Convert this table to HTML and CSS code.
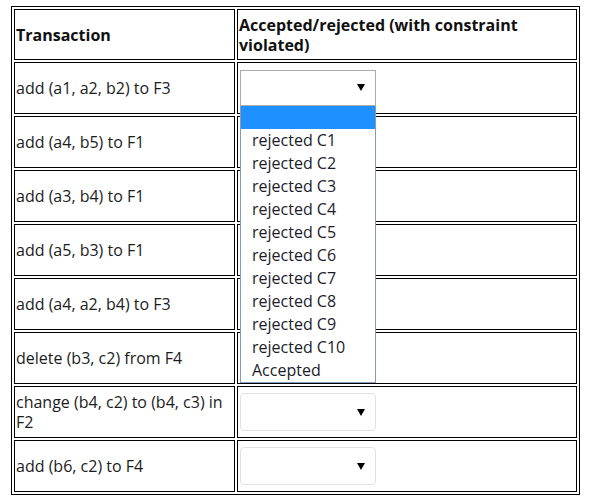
FILE: index.html
```html
<!DOCTYPE html>
<html>
<head>
<meta charset="utf-8">
<link rel="stylesheet" href="styles.css">
</head>
<body>
<table class="grid">
  <tr class="head">
    <th class="c1">Transaction</th>
    <th class="c2">Accepted/rejected (with constraint violated)</th>
  </tr>
  <tr>
    <td>add (a1, a2, b2) to F3</td>
    <td class="sc">
      <div class="dd">
        <div class="sel open"><svg class="arr" width="8" height="7" viewBox="0 0 8 7"><polygon points="0,0 8,0 4,7" fill="#000"/></svg></div>
        <ul class="list">
          <li class="hl">&nbsp;</li>
          <li>rejected C1</li>
          <li>rejected C2</li>
          <li>rejected C3</li>
          <li>rejected C4</li>
          <li>rejected C5</li>
          <li>rejected C6</li>
          <li>rejected C7</li>
          <li>rejected C8</li>
          <li>rejected C9</li>
          <li>rejected C10</li>
          <li>Accepted</li>
        </ul>
      </div>
    </td>
  </tr>
  <tr><td>add (a4, b5) to F1</td><td class="sc"><div class="sel"><svg class="arr" width="8" height="7" viewBox="0 0 8 7"><polygon points="0,0 8,0 4,7" fill="#000"/></svg></div></td></tr>
  <tr><td>add (a3, b4) to F1</td><td class="sc"><div class="sel"><svg class="arr" width="8" height="7" viewBox="0 0 8 7"><polygon points="0,0 8,0 4,7" fill="#000"/></svg></div></td></tr>
  <tr><td>add (a5, b3) to F1</td><td class="sc"><div class="sel"><svg class="arr" width="8" height="7" viewBox="0 0 8 7"><polygon points="0,0 8,0 4,7" fill="#000"/></svg></div></td></tr>
  <tr><td>add (a4, a2, b4) to F3</td><td class="sc"><div class="sel"><svg class="arr" width="8" height="7" viewBox="0 0 8 7"><polygon points="0,0 8,0 4,7" fill="#000"/></svg></div></td></tr>
  <tr><td>delete (b3, c2) from F4</td><td class="sc"><div class="sel"><svg class="arr" width="8" height="7" viewBox="0 0 8 7"><polygon points="0,0 8,0 4,7" fill="#000"/></svg></div></td></tr>
  <tr><td>change (b4, c2) to (b4, c3) in F2</td><td class="sc"><div class="sel"><svg class="arr" width="8" height="7" viewBox="0 0 8 7"><polygon points="0,0 8,0 4,7" fill="#000"/></svg></div></td></tr>
  <tr><td>add (b6, c2) to F4</td><td class="sc"><div class="sel"><svg class="arr" width="8" height="7" viewBox="0 0 8 7"><polygon points="0,0 8,0 4,7" fill="#000"/></svg></div></td></tr>
</table>
</body>
</html>
```
FILE: styles.css
```css
html, body {
  background: #fff;
}
body {
  margin: 6px 0 0 11px;
  font-family: "Open Sans", "Liberation Sans", sans-serif;
  font-size: 16px;
  color: #1c1c1c;
}
.grid {
  border: 1px solid #000;
  border-spacing: 2px;
  width: 569px;
  table-layout: fixed;
}
.grid th, .grid td {
  border: 1px solid #000;
  padding: 0 1px;
  text-align: left;
  vertical-align: middle;
  line-height: 20px;
  box-sizing: border-box;
}
.grid th {
  font-weight: bold;
  color: #111;
}
.grid tr {
  height: 52px;
}
.grid tr.head {
  height: 51px;
}
.c1 {
  width: 221px;
}
.dd {
  position: relative;
  width: 136px;
  margin-left: 1px;
  margin-top: -1px;
}
.sel {
  width: 136px;
  height: 38px;
  box-sizing: border-box;
  border: 1px solid #e2e2e2;
  border-radius: 4px;
  background: #fff;
  margin-left: 1px;
  display: flex;
  align-items: center;
  justify-content: flex-end;
  padding-right: 10px;
}
.dd .sel {
  margin-left: 0;
}
.sel.open {
  height: 36px;
  border: 1px solid #ababab;
  border-radius: 0;
}
.arr {
  display: block;
}
.list {
  position: absolute;
  left: 0;
  top: 36px;
  width: 136px;
  box-sizing: border-box;
  margin: 0;
  padding: 0;
  list-style: none;
  background: #fff;
  border: 1px solid #7f9db9;
  border-top: none;
  z-index: 5;
}
.list li {
  height: 23px;
  line-height: 23px;
  padding-left: 11px;
  color: #1c1c2a;
  white-space: nowrap;
}
.list li.hl {
  background: #1e90ff;
}
```
